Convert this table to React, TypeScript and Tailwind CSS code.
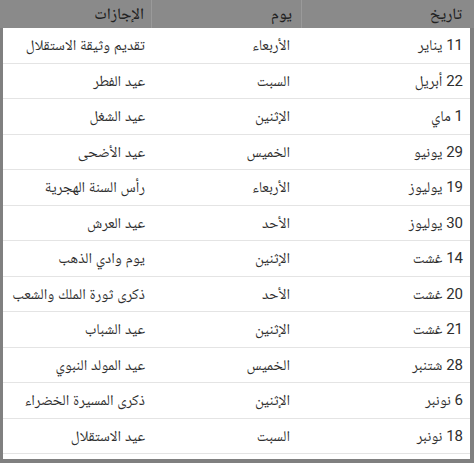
import React from "react";

const rows = [
  ["11 يناير", "الأربعاء", "تقديم وثيقة الاستقلال"],
  ["22 أبريل", "السبت", "عيد الفطر"],
  ["1 ماي", "الإثنين", "عيد الشغل"],
  ["29 يونيو", "الخميس", "عيد الأضحى"],
  ["19 يوليوز", "الأربعاء", "رأس السنة الهجرية"],
  ["30 يوليوز", "الأحد", "عيد العرش"],
  ["14 غشت", "الإثنين", "يوم وادي الذهب"],
  ["20 غشت", "الأحد", "ذكرى ثورة الملك والشعب"],
  ["21 غشت", "الإثنين", "عيد الشباب"],
  ["28 شتنبر", "الخميس", "عيد المولد النبوي"],
  ["6 نونبر", "الإثنين", "ذكرى المسيرة الخضراء"],
  ["18 نونبر", "السبت", "عيد الاستقلال"],
];

export default function App() {
  return (
    <div
      dir="rtl"
      className="w-[474px] h-[463px] bg-[#808080] px-[4px] pb-[4px] pl-[3px] overflow-hidden"
      style={{ fontFamily: 'Roboto, "Noto Naskh Arabic", "Noto Sans Arabic", "DejaVu Sans", sans-serif' }}
    >
      {/* Header */}
      <div className="grid grid-cols-[169px_150px_1fr] h-[28px] bg-[#8a8a8a] -mx-[4px] -ml-[3px] pr-[4px] pl-[3px] text-[#222222] text-[16px] font-medium">
        <div className="flex items-center pr-[8px] border-l border-[#9a9a9a]">تاريخ</div>
        <div className="flex items-center pr-[9px] border-l border-[#9a9a9a]">يوم</div>
        <div className="flex items-center pr-[7px]">الإجازات</div>
      </div>

      {/* Body */}
      <div className="bg-white h-[431px]">
        {rows.map((r) => (
          <div
            key={r[0]}
            className="grid grid-cols-[169px_150px_1fr] h-[35.5px] border-b-[1.5px] border-[#e4e4e4] text-[#2e2e2e] text-[15px]"
          >
            <div className="flex items-center pr-[7px]">{r[0]}</div>
            <div className="flex items-center pr-[11px]">{r[1]}</div>
            <div className="flex items-center pr-[6px]">{r[2]}</div>
          </div>
        ))}
      </div>
    </div>
  );
}
